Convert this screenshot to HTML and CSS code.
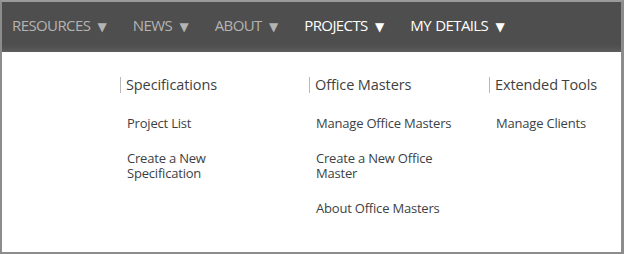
FILE: index.html
```html
<!DOCTYPE html>
<html>
<head>
<meta charset="utf-8">
<link rel="stylesheet" href="styles.css">
</head>
<body>
<div class="frame">
  <nav class="nav">
    <a class="nav-item">RESOURCES <span class="caret">▼</span></a>
    <a class="nav-item">NEWS <span class="caret">▼</span></a>
    <a class="nav-item">ABOUT <span class="caret">▼</span></a>
    <a class="nav-item active">PROJECTS <span class="caret">▼</span></a>
    <a class="nav-item active">MY DETAILS <span class="caret">▼</span></a>
  </nav>
  <div class="menu">
    <div class="col col-1">
      <h3 class="col-title">Specifications</h3>
      <ul class="links">
        <li>Project List</li>
        <li>Create a New<br>Specification</li>
      </ul>
    </div>
    <div class="col col-2">
      <h3 class="col-title">Office Masters</h3>
      <ul class="links">
        <li>Manage Office Masters</li>
        <li>Create a New Office<br>Master</li>
        <li>About Office Masters</li>
      </ul>
    </div>
    <div class="col col-3">
      <h3 class="col-title">Extended Tools</h3>
      <ul class="links">
        <li>Manage Clients</li>
      </ul>
    </div>
  </div>
</div>
</body>
</html>
```
FILE: styles.css
```css
* { box-sizing: border-box; }
html, body { margin: 0; padding: 0; background: #fff; }
body { font-family: "Open Sans", "DejaVu Sans", sans-serif; }
.frame {
  width: 624px;
  height: 254px;
  border: 2px solid #8c8c8c;
  border-top-color: #9a9a9a;
  border-right-width: 3px;
  background: #fff;
  overflow: hidden;
}
.nav {
  height: 50px;
  background: linear-gradient(to bottom, #4e4e4e 0, #4e4e4e 42px, #555 47px, #5e5e5e 50px);
  display: flex;
  align-items: center;
  padding-left: 10px;
  gap: 26px;
}
.nav-item {
  color: #b4b4b4;
  font-size: 15px;
  letter-spacing: -0.6px;
  word-spacing: 1px;
  white-space: nowrap;
  padding-bottom: 5px;
}
.nav-item.active { color: #fff; }
.caret {
  font-size: 12px;
  margin-left: 3px;
  letter-spacing: 0;
  font-family: "DejaVu Sans", sans-serif;
}
.menu {
  display: flex;
  padding-left: 118px;
  padding-top: 25px;
}
.col-1 { width: 189px; }
.col-2 { width: 180px; }
.col-3 { width: 130px; }
.col-title {
  margin: 0;
  font-size: 14.5px;
  letter-spacing: -0.1px;
  font-weight: normal;
  color: #3f3f3f;
  line-height: 16px;
  border-left: 1px solid #b8b8b8;
  padding-left: 5px;
}
.links {
  list-style: none;
  margin: 23px 0 0;
  padding: 0 0 0 7px;
  color: #3c3f46;
  font-size: 13px;
  letter-spacing: -0.2px;
  line-height: 15px;
}
.links li { margin-bottom: 20px; }
```
